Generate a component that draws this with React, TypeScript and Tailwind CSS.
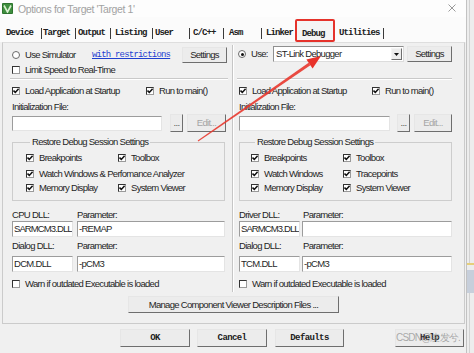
import React from "react";

const ui = "font-['Liberation_Sans','Arial',sans-serif]";
const mono = "font-['Liberation_Mono','DejaVu_Sans_Mono',monospace]";

function Check({ checked = true }: { checked?: boolean }) {
  return (
    <span className="w-[8px] h-[8px] shrink-0 bg-white border border-t-[#333] border-l-[#333] border-r-[#9a9a9a] border-b-[#9a9a9a] flex items-center justify-center">
      {checked && (
        <svg width="6" height="6" viewBox="0 0 6 6">
          <path d="M0.5 2.6 L2.3 4.4 L5.6 0.8" stroke="#111" strokeWidth="1.5" fill="none" />
        </svg>
      )}
    </span>
  );
}

function Radio({ checked = false }: { checked?: boolean }) {
  return (
    <span className="w-[8px] h-[8px] shrink-0 rounded-full bg-white border border-[#6a6a6a] flex items-center justify-center">
      {checked && <span className="w-[3px] h-[3px] rounded-full bg-[#111]" />}
    </span>
  );
}

function CheckRow({ label, checked = true, className = "" }: { label: string; checked?: boolean; className?: string }) {
  return (
    <div className={`flex items-center h-[12px] ${className}`}>
      <Check checked={checked} />
      <span className="ml-[5px] whitespace-nowrap">{label}</span>
    </div>
  );
}

function Field({ className = "", children }: { className?: string; children?: React.ReactNode }) {
  return (
    <div className={`bg-white border border-t-[#9c9c9c] border-l-[#9c9c9c] border-r-[#e4e4e4] border-b-[#e4e4e4] flex items-center pl-[1px] whitespace-nowrap overflow-hidden ${className}`}>
      {children}
    </div>
  );
}

function Btn({ className = "", children }: { className?: string; children?: React.ReactNode }) {
  return (
    <div className={`bg-[#ececec] border border-t-[#e6e6e6] border-l-[#e6e6e6] border-r-[#6e6e6e] border-b-[#6e6e6e] flex items-center justify-center whitespace-nowrap ${className}`}>
      {children}
    </div>
  );
}

function Sep() {
  return <div className="w-[1px] h-[11px] bg-[#3a3a3a] mb-[3px] shrink-0" />;
}

function Group({ className = "", left, right }: { className?: string; left: string[]; right: string[] }) {
  return (
    <fieldset className={`border border-[#cdcdcd] pb-[6px] ${className}`}>
      <legend className="ml-[4px] px-[2px] leading-[12px]">Restore Debug Session Settings</legend>
      <div className="flex flex-col">
        {left.map((l, i) => (
          <div key={l} className={`flex items-center h-[12px] ${i === 0 ? "mt-[4px]" : i === 1 ? "mt-[4px]" : "mt-[2px]"}`}>
            <div className="w-[92px] shrink-0 flex items-center">
              <Check />
              <span className="ml-[5px] whitespace-nowrap">{l}</span>
            </div>
            {right[i] && (
              <div className="flex items-center">
                <Check />
                <span className="ml-[5px] whitespace-nowrap">{right[i]}</span>
              </div>
            )}
          </div>
        ))}
      </div>
    </fieldset>
  );
}

function TitleBar() {
  return (
    <div className="h-[17px] shrink-0 bg-[#fdfdfd] flex items-center pl-[2px] pr-[10px]">
      <svg width="11" height="11" viewBox="0 0 11 11">
        <rect x="0" y="0" width="11" height="11" rx="1" fill="#3f8f3f" />
        <path d="M2 2.5 L5.5 9 L9 2.5" stroke="#d9f0d0" strokeWidth="1.6" fill="none" />
        <rect x="0.5" y="0.5" width="10" height="10" rx="1" fill="none" stroke="#2a6a2a" strokeWidth="0.8" />
      </svg>
      <span className="ml-[5px] text-[10.5px] tracking-[-0.4px] leading-[14px] text-[#a2a2a2] whitespace-nowrap">Options for Target 'Target 1'</span>
      <span className="flex-1" />
      <svg width="8" height="8" viewBox="0 0 8 8" className="mb-[1px]">
        <path d="M0.5 0.5 L7.5 7.5 M7.5 0.5 L0.5 7.5" stroke="#9a9a9a" strokeWidth="1" />
      </svg>
    </div>
  );
}

function Tabs() {
  return (
    <div className={`h-[25px] shrink-0 bg-[#fbfbfb] flex items-end pl-[6px] ${mono} font-bold text-[9px] leading-[10px] tracking-[-0.9px] text-[#202020]`}>
      <span className="w-[35px] mb-[4px] shrink-0">Device</span>
      <Sep />
      <span className="w-[1px] shrink-0" />
      <span className="w-[32px] mb-[4px] shrink-0">Target</span>
      <Sep />
      <span className="w-[2px] shrink-0" />
      <span className="w-[32px] mb-[4px] shrink-0">Output</span>
      <Sep />
      <span className="w-[4px] shrink-0" />
      <span className="w-[37px] mb-[4px] shrink-0">Listing</span>
      <Sep />
      <span className="w-[2px] shrink-0" />
      <span className="w-[34px] mb-[4px] shrink-0">User</span>
      <Sep />
      <span className="w-[3px] shrink-0" />
      <span className="w-[30px] mb-[4px] shrink-0">C/C++</span>
      <Sep />
      <span className="w-[5px] shrink-0" />
      <span className="w-[32px] mb-[4px] shrink-0">Asm</span>
      <Sep />
      <span className="w-[4px] shrink-0" />
      <span className="w-[29px] mb-[4px] shrink-0">Linker</span>
      <div className="w-[40px] h-[23px] shrink-0 border-2 border-[#e5322b] rounded-[2px] bg-[#f4f4f4] pl-[5px] pt-[8px]">Debug</div>
      <span className="w-[44px] mb-[4px] ml-[4px] shrink-0">Utilities</span>
      <Sep />
    </div>
  );
}

function LeftColumn() {
  return (
    <div className="w-[229px] shrink-0 pl-[9px] flex flex-col">
      <div className="mt-[4px] h-[16px] flex items-center">
        <Radio />
        <span className="ml-[5px] w-[67px] shrink-0 whitespace-nowrap">Use Simulator</span>
        <span className={`w-[90px] shrink-0 ${mono} text-[9px] tracking-[-0.8px] text-[#1f3fd0] underline whitespace-nowrap`}>with restrictions</span>
        <Btn className="w-[45px] h-[16px]">Settings</Btn>
      </div>
      <CheckRow className="mt-[1px]" label="Limit Speed to Real-Time" checked={false} />
      <div className="mt-[2px] -ml-[2px] w-[218px] h-[2px] border-t border-t-[#c9c9c9] border-b border-b-white" />
      <div className="mt-[5px] h-[12px] flex items-center">
        <div className="w-[134px] shrink-0 flex items-center">
          <Check />
          <span className="ml-[5px] whitespace-nowrap">Load Application at Startup</span>
        </div>
        <Check />
        <span className="ml-[5px] whitespace-nowrap">Run to main()</span>
      </div>
      <div className="mt-[4px] h-[12px] whitespace-nowrap">Initialization File:</div>
      <div className="mt-[1px] h-[18px] flex items-center">
        <Field className="w-[150px] h-[15px]" />
        <Btn className="ml-[8px] w-[13px] h-[18px] text-[#555]">...</Btn>
        <Btn className="ml-[4px] w-[39px] h-[18px] text-[#a5a5a5]">Edit...</Btn>
      </div>
      <Group
        className="mt-[4px] w-[213px] pl-[13px]"
        left={["Breakpoints", "Watch Windows & Perfomance Analyzer", "Memory Display"]}
        right={["Toolbox", "", "System Viewer"]}
      />
      <div className="mt-[8px] h-[12px] flex">
        <span className="w-[65px] shrink-0">CPU DLL:</span>
        <span>Parameter:</span>
      </div>
      <div className="h-[16px] flex gap-[4px]">
        <Field className="w-[61px] h-[16px] tracking-[-0.9px]">SARMCM3.DLL</Field>
        <Field className="w-[148px] h-[16px]">-REMAP</Field>
      </div>
      <div className="mt-[3px] h-[12px] flex">
        <span className="w-[65px] shrink-0">Dialog DLL:</span>
        <span>Parameter:</span>
      </div>
      <div className="mt-[4px] h-[16px] flex gap-[4px]">
        <Field className="w-[61px] h-[16px]">DCM.DLL</Field>
        <Field className="w-[148px] h-[16px]">-pCM3</Field>
      </div>
      <CheckRow className="mt-[6px]" label="Warn if outdated Executable is loaded" checked={false} />
    </div>
  );
}

function RightColumn() {
  return (
    <div className="flex-1 pl-[5px] flex flex-col">
      <div className="mt-[3px] h-[16px] flex items-center">
        <span className="-ml-[1px]">
          <Radio checked />
        </span>
        <span className="ml-[5px] w-[22px] shrink-0">Use:</span>
        <div className="w-[131px] h-[16px] shrink-0 bg-white border border-t-[#8f8f8f] border-l-[#8f8f8f] border-r-[#dcdcdc] border-b-[#dcdcdc] flex items-center pl-[2px] pr-[1px]">
          <span className="flex-1 whitespace-nowrap">ST-Link Debugger</span>
          <div className="w-[11px] h-[12px] bg-[#ececec] border border-t-[#f4f4f4] border-l-[#f4f4f4] border-r-[#6e6e6e] border-b-[#6e6e6e] flex items-center justify-center">
            <svg width="5" height="3" viewBox="0 0 5 3">
              <path d="M0 0 L5 0 L2.5 3 Z" fill="#111" />
            </svg>
          </div>
        </div>
        <Btn className="ml-[3px] w-[45px] h-[16px]">Settings</Btn>
      </div>
      <div className="mt-[2px] h-[12px]" />
      <div className="mt-[2px] -ml-[2px] w-[215px] h-[2px] border-t border-t-[#c9c9c9] border-b border-b-white" />
      <div className="mt-[5px] h-[12px] flex items-center">
        <div className="w-[133px] shrink-0 flex items-center">
          <Check />
          <span className="ml-[5px] whitespace-nowrap">Load Application at Startup</span>
        </div>
        <Check />
        <span className="ml-[5px] whitespace-nowrap">Run to main()</span>
      </div>
      <div className="mt-[4px] h-[12px] whitespace-nowrap">Initialization File:</div>
      <div className="mt-[1px] h-[18px] flex items-center">
        <Field className="w-[151px] h-[15px]" />
        <Btn className="ml-[7px] w-[13px] h-[18px] text-[#555]">...</Btn>
        <Btn className="ml-[4px] w-[38px] h-[18px] text-[#a5a5a5]">Edit...</Btn>
      </div>
      <Group
        className="mt-[4px] w-[213px] pl-[11px]"
        left={["Breakpoints", "Watch Windows", "Memory Display"]}
        right={["Toolbox", "Tracepoints", "System Viewer"]}
      />
      <div className="mt-[8px] h-[12px] flex">
        <span className="w-[64px] shrink-0">Driver DLL:</span>
        <span>Parameter:</span>
      </div>
      <div className="h-[16px] flex gap-[2px]">
        <Field className="w-[61px] h-[16px] tracking-[-0.9px]">SARMCM3.DLL</Field>
        <Field className="w-[150px] h-[16px]" />
      </div>
      <div className="mt-[3px] h-[12px] flex">
        <span className="w-[64px] shrink-0">Dialog DLL:</span>
        <span>Parameter:</span>
      </div>
      <div className="mt-[4px] h-[16px] flex gap-[2px]">
        <Field className="w-[61px] h-[16px]">TCM.DLL</Field>
        <Field className="w-[150px] h-[16px]">-pCM3</Field>
      </div>
      <CheckRow className="mt-[6px]" label="Warn if outdated Executable is loaded" checked={false} />
    </div>
  );
}

function Panel() {
  return (
    <div className="ml-[2px] w-[463px] h-[282px] shrink-0 border border-[#cbcbcb] border-t-[#dedede] flex flex-col">
      <div className="h-[249px] flex shrink-0">
        <LeftColumn />
        <div className="w-[2px] shrink-0 border-l border-l-[#c6c6c6] border-r border-r-white mt-[2px]" />
        <RightColumn />
      </div>
      <div className="mt-[4px] flex justify-center">
        <Btn className="w-[211px] h-[17px]">Manage Component Viewer Description Files ...</Btn>
      </div>
    </div>
  );
}

function BottomBar() {
  return (
    <div className={`flex pt-[5px] pl-[120px] ${mono} font-bold text-[9px] tracking-[-0.6px] text-[#202020]`}>
      <Btn className="w-[70px] h-[18px]">OK</Btn>
      <Btn className="ml-[7px] w-[70px] h-[18px]">Cancel</Btn>
      <Btn className="ml-[8px] w-[69px] h-[18px]">Defaults</Btn>
      <div className="relative ml-[51px]">
        <Btn className="w-[69px] h-[18px]">Help</Btn>
        <span className={`absolute left-[1px] top-[3px] ${ui} font-normal tracking-[-0.8px] text-[10px] leading-[12px] text-[#8a8a8a]/70 whitespace-nowrap`}>
          CSDN@凌发兮.
        </span>
      </div>
    </div>
  );
}

function RightStrip() {
  return (
    <div className="flex-1 flex flex-col bg-[#ededed]">
      <div className="h-[263px] border-l border-l-[#d2d2d2] ml-[2px]" />
      <div className="h-[2px] bg-[#e6cf7a]" />
      <div className="mt-[5px] h-[23px] bg-[#c7cfdb]" />
      <div className="flex-1 border-l border-l-[#d2d2d2] ml-[2px]" />
    </div>
  );
}

function Arrow() {
  return (
    <svg className="absolute left-0 top-0 pointer-events-none" width="474" height="353" viewBox="0 0 474 353">
      <polygon points="198.3,141.4 197.7,140.6 308.6,62.8 310.4,65.2" fill="#e8372e" opacity="0.9" />
      <polygon points="321,56 306.4,59.6 312.6,68.4" fill="#e8322a" />
    </svg>
  );
}

export default function App() {
  return (
    <div className={`relative w-[474px] h-[353px] overflow-hidden bg-[#ececec] flex ${ui} text-[9.5px] tracking-[-0.7px] leading-[12px] text-[#1f1f1f]`}>
      <div className="w-[467px] h-full shrink-0 flex flex-col bg-[#f0f0f0] border-r border-r-[#c2c2c2]">
        <TitleBar />
        <Tabs />
        <Panel />
        <BottomBar />
      </div>
      <RightStrip />
      <Arrow />
    </div>
  );
}
